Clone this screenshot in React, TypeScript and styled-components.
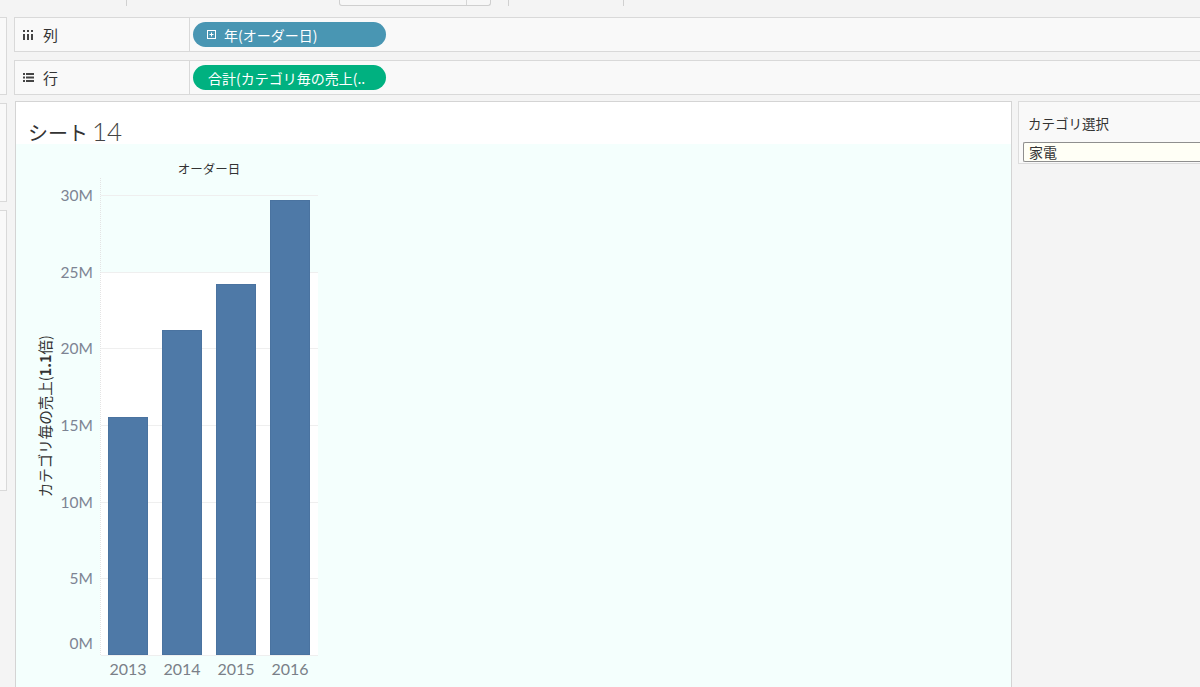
import styled, { createGlobalStyle } from 'styled-components';

const GlobalStyle = createGlobalStyle`
	html, body {
		margin: 0;
		padding: 0;
		height: 100%;
		background: #f4f4f4;
		font-family: "Noto Sans CJK JP", "Noto Sans", sans-serif;
		color: #333;
		overflow: hidden;
	}
	#root {
		height: 100%;
	}
`

const Page = styled.div`
	height: 100%;
	display: flex;
	flex-direction: column;
`

const TopStrip = styled.div`
	height: 17px;
	flex: none;
	display: flex;
	align-items: flex-start;
`

const Tick = styled.span<{ left: number }>`
	margin-left: ${props => props.left}px;
	width: 1px;
	height: 6px;
	background: #d0d0d0;
`

const ToolBox = styled.div<{ left: number }>`
	margin-left: ${props => props.left}px;
	width: 150px;
	height: 5px;
	border: 1px solid #cfcfcf;
	border-top: none;
	border-radius: 0 0 3px 3px;
	background: #f7f7f7;
	display: flex;
	justify-content: flex-end;
	span {
		width: 23px;
		border-left: 1px solid #d6d6d6;
	}
`

const Workspace = styled.div`
	flex: 1;
	display: flex;
	min-height: 0;
`

const LeftRail = styled.div`
	width: 7px;
	flex: none;
	display: flex;
	flex-direction: column;
	gap: 8px;
`

const RailPanel = styled.div<{ h: number }>`
	height: ${props => props.h}px;
	background: #f9f9f9;
	border: 1px solid #d9d9d9;
	border-left: none;
`

const Main = styled.div`
	flex: 1;
	margin-left: 7px;
	display: flex;
	flex-direction: column;
	min-width: 0;
`

const Shelf = styled.div<{ gap: number }>`
	height: 33px;
	margin-bottom: ${props => props.gap}px;
	display: flex;
	align-items: center;
	background: #f9f9f9;
	border: 1px solid #d9d9d9;
	border-right: none;
`

const ShelfLabel = styled.div`
	width: 175px;
	height: 100%;
	box-sizing: border-box;
	padding-left: 8px;
	display: flex;
	align-items: center;
	gap: 9px;
	font-size: 15px;
	color: #333;
	border-right: 1px solid #d9d9d9;
`

const Pill = styled.div<{ color: string; indent: number }>`
	margin-left: 3px;
	width: 193px;
	height: 25px;
	box-sizing: border-box;
	border-radius: 13px;
	background: ${props => props.color};
	color: #fff;
	font-size: 14px;
	display: flex;
	align-items: center;
	gap: 8px;
	padding-left: ${props => props.indent}px;
	white-space: nowrap;
	overflow: hidden;
`

const Content = styled.div`
	flex: 1;
	display: flex;
	min-height: 0;
`

const SheetPane = styled.div`
	width: 997px;
	flex: none;
	box-sizing: border-box;
	margin-left: 1px;
	background: #fff;
	border: 1px solid #d4d4d4;
	border-bottom: none;
	display: flex;
	flex-direction: column;
`

const SheetTitle = styled.div`
	height: 42px;
	box-sizing: border-box;
	padding: 15px 0 0 12px;
	display: flex;
	align-items: baseline;
	gap: 4px;
	line-height: 28px;
	color: #333;
	span:first-child {
		font-size: 20px;
	}
	span:last-child {
		font-family: "Lato", sans-serif;
		font-weight: 300;
		font-size: 26px;
		color: #444;
	}
`

const ChartArea = styled.div`
	flex: 1;
	background: #f4fffd;
	display: grid;
	grid-template-columns: 54px 30px 218px;
	grid-template-rows: 34px 477px 32px;
`

const ColumnHeader = styled.div`
	grid-column: 3;
	grid-row: 1;
	display: flex;
	align-items: flex-end;
	justify-content: center;
	line-height: 18px;
	font-size: 12.5px;
	color: #333;
`

const AxisTitle = styled.div`
	grid-column: 1;
	grid-row: 2;
	display: flex;
	align-items: center;
	justify-content: center;
	span {
		writing-mode: vertical-rl;
		text-orientation: sideways;
		transform: rotate(180deg);
		font-size: 14.5px;
		color: #333;
		white-space: nowrap;
		margin-left: 2px;
	}
	b {
		font-weight: 700;
	}
`

const TickColumn = styled.div`
	grid-column: 2;
	grid-row: 2;
	position: relative;
`

const TickLabel = styled.span<{ edge: boolean }>`
	position: absolute;
	right: 7px;
	transform: translateY(${props => (props.edge ? '-118%' : '-50%')});
	font-family: "Lato", sans-serif;
	font-size: 15.5px;
	line-height: 18px;
	color: #7d8493;
`

const Plot = styled.div`
	grid-column: 3;
	grid-row: 2;
	position: relative;
	background: linear-gradient(#f4fffd 0, #f4fffd 94px, #fff 94px);
	border-left: 1px dotted #e4e4e4;
	display: flex;
	align-items: flex-end;
	gap: 14px;
	padding-left: 7px;
`

const GridLine = styled.div`
	position: absolute;
	left: 0;
	right: 0;
	height: 1px;
	background: #efefef;
`

const Bar = styled.div`
	position: relative;
	width: 40px;
	box-sizing: border-box;
	background: #4e79a7;
	border: 1px solid #4a73a0;
`

const YearRow = styled.div`
	grid-column: 3;
	grid-row: 3;
	display: flex;
	gap: 14px;
	padding-left: 8px;
	padding-top: 4px;
`

const YearLabel = styled.span`
	width: 40px;
	text-align: center;
	font-family: "Lato", sans-serif;
	font-size: 16px;
	color: #7a7f88;
`

const RightPanel = styled.div`
	flex: 1;
	margin-left: 6px;
	min-width: 0;
`

const FilterCard = styled.div`
	height: 63px;
	box-sizing: border-box;
	background: #f9f9f9;
	border: 1px solid #dcdcdc;
	border-right: none;
	padding: 11px 0 0 4px;
`

const FilterTitle = styled.div`
	font-size: 13.5px;
	padding-left: 5px;
	height: 29px;
	color: #333;
`

const Dropdown = styled.div`
	height: 20px;
	box-sizing: border-box;
	border: 1px solid #8f8f8f;
	border-right: none;
	border-radius: 2px 0 0 2px;
	background: #fffff6;
	font-size: 14px;
	line-height: 18px;
	padding-left: 5px;
	color: #333;
`

const ColumnsIcon = () => (
	<svg width="11" height="10" viewBox="0 0 11 10">
		{[1, 5, 9].map(x => (
			<g key={x} fill="#444">
				<rect x={x - 1} y="0" width="2" height="2" />
				<rect x={x - 1} y="4" width="2" height="6" />
			</g>
		))}
	</svg>
)

const RowsIcon = () => (
	<svg width="11" height="9" viewBox="0 0 11 9">
		{[0, 3.5, 7].map(y => (
			<g key={y} fill="#444">
				<rect x="0" y={y} width="2" height="2" />
				<rect x="3" y={y} width="8" height="2" />
			</g>
		))}
	</svg>
)

const ExpandIcon = () => (
	<svg width="9" height="9" viewBox="0 0 9 9">
		<rect x="0.5" y="0.5" width="8" height="8" fill="none" stroke="#fff" />
		<path d="M2.5 4.5h4M4.5 2.5v4" stroke="#fff" />
	</svg>
)

const PX_PER_M = 76.67 / 5;
const ticks = [30, 25, 20, 15, 10, 5, 0];
const sales = [
	{ year: 2013, value: 15.5 },
	{ year: 2014, value: 21.2 },
	{ year: 2015, value: 24.2 },
	{ year: 2016, value: 29.7 },
];
const PLOT_H = 477;

function App() {
	return (
		<Page>
			<GlobalStyle />
			<TopStrip>
				<Tick left={126} />
				<ToolBox left={212}><span /></ToolBox>
				<Tick left={17} />
				<Tick left={114} />
			</TopStrip>
			<Workspace>
				<LeftRail>
					<RailPanel h={76} />
					<RailPanel h={97} />
					<RailPanel h={279} />
				</LeftRail>
				<Main>
					<Shelf gap={8}>
						<ShelfLabel><ColumnsIcon />列</ShelfLabel>
						<Pill color="#4996b3" indent={14}><ExpandIcon />年(オーダー日)</Pill>
					</Shelf>
					<Shelf gap={6}>
						<ShelfLabel><RowsIcon />行</ShelfLabel>
						<Pill color="#00b180" indent={15}>合計(カテゴリ毎の売上(..</Pill>
					</Shelf>
					<Content>
						<SheetPane>
							<SheetTitle><span>シート</span><span>14</span></SheetTitle>
							<ChartArea>
								<ColumnHeader>オーダー日</ColumnHeader>
								<AxisTitle><span>カテゴリ毎の売上(<b>1.1</b>倍)</span></AxisTitle>
								<TickColumn>
									{ticks.map(t => (
										<TickLabel key={t} edge={t === 0} style={{ top: PLOT_H - t * PX_PER_M }}>
											{t}M
										</TickLabel>
									))}
								</TickColumn>
								<Plot>
									{ticks.map(t => (
										<GridLine key={t} style={{ top: PLOT_H - t * PX_PER_M }} />
									))}
									{sales.map(s => (
										<Bar key={s.year} style={{ height: s.value * PX_PER_M }} />
									))}
								</Plot>
								<YearRow>
									{sales.map(s => (
										<YearLabel key={s.year}>{s.year}</YearLabel>
									))}
								</YearRow>
							</ChartArea>
						</SheetPane>
						<RightPanel>
							<FilterCard>
								<FilterTitle>カテゴリ選択</FilterTitle>
								<Dropdown>家電</Dropdown>
							</FilterCard>
						</RightPanel>
					</Content>
				</Main>
			</Workspace>
		</Page>
	)
}

export default App;
